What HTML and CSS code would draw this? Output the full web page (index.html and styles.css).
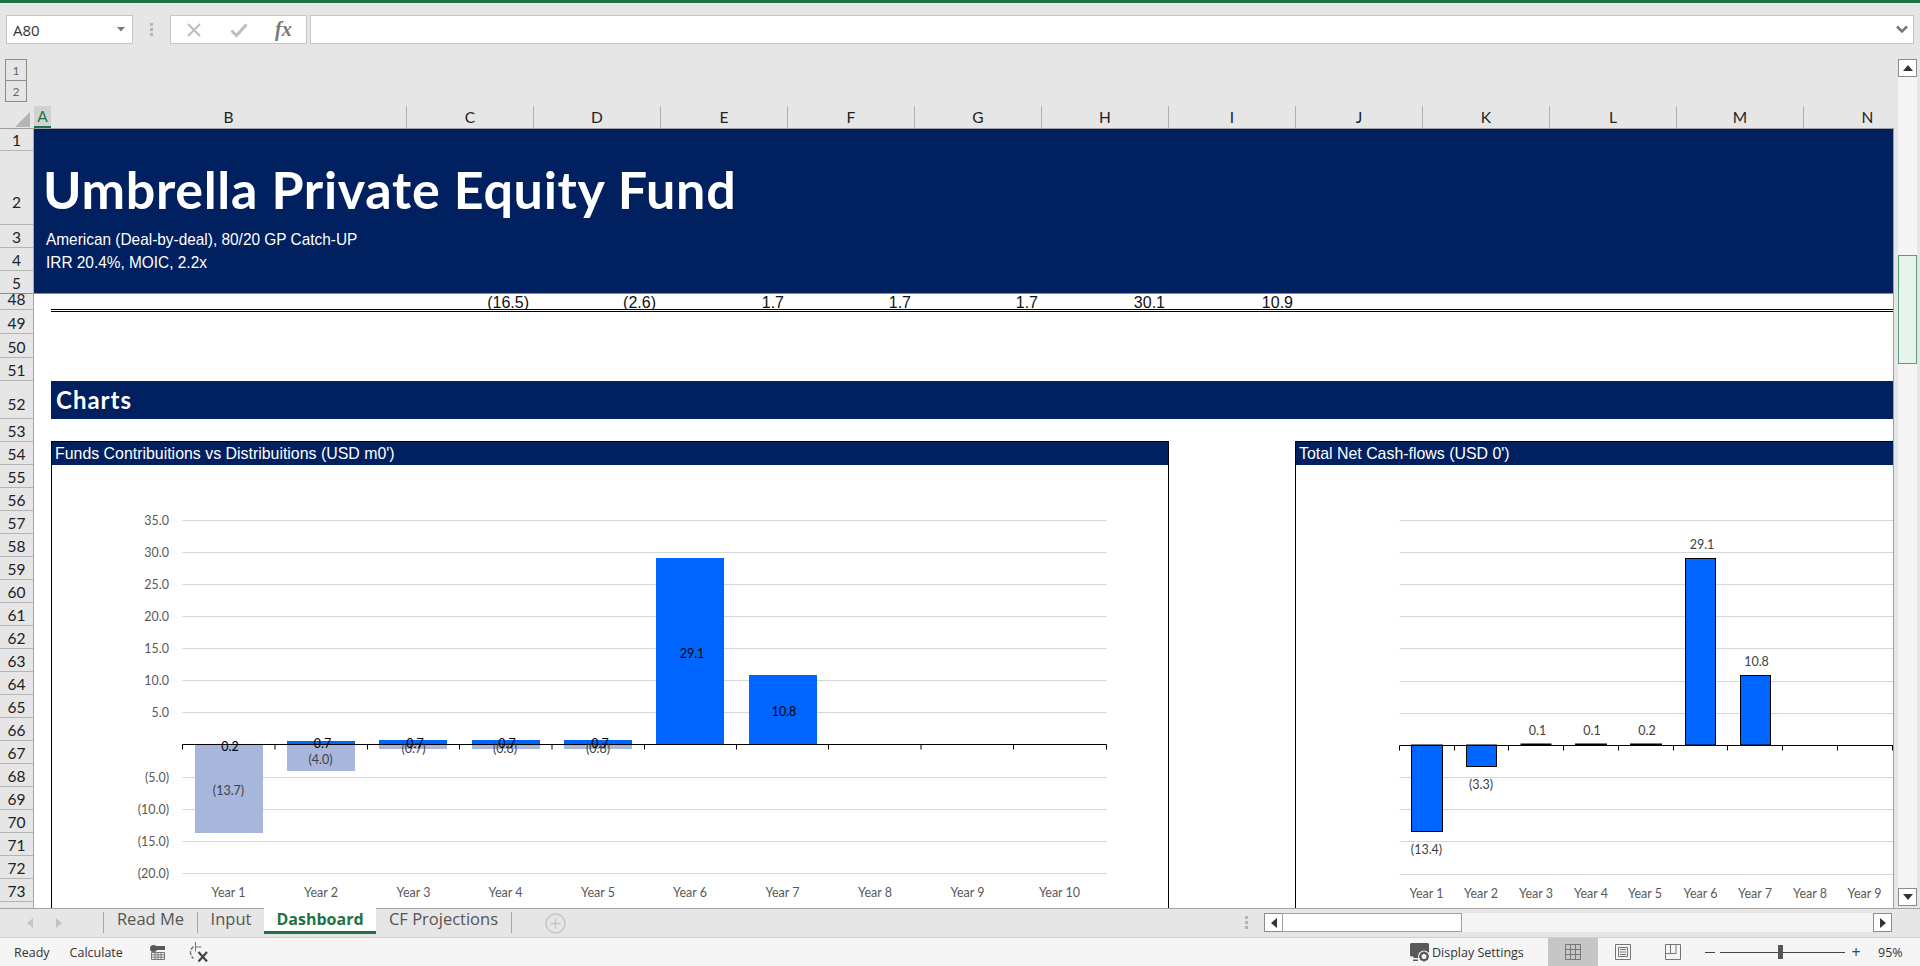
FILE: index.html
```html
<!DOCTYPE html>
<html lang="en">
<head>
<meta charset="utf-8">
<title>Umbrella Private Equity Fund</title>
<link rel="stylesheet" href="styles.css">
</head>
<body>
<div class="accent"></div>
<div class="formula-bar">
  <div class="namebox"><span>A80</span><svg class="caret" width="8" height="5" viewBox="0 0 8 5"><path d="M0 0h8L4 4.500z"/></svg></div>
  <div class="grip"><i></i><i></i><i></i></div>
  <div class="fxbox">
    <svg width="16" height="16" viewBox="0 0 16 16"><path d="M2 2l12 12M14 2L2 14" class="ic-light"/></svg>
    <svg width="18" height="16" viewBox="0 0 18 16"><path d="M1.500 8.500l5 5L16.500 2.500" class="ic-light ic-thick"/></svg>
    <span class="fx">fx</span>
  </div>
  <div class="formula-input"><svg width="12" height="9" viewBox="0 0 12 9"><path d="M1 1.500l5 5 5-5" class="ic-chev"/></svg></div>
</div>
<div class="middle">
  <div class="left">
    <div class="outline"><span class="lvl">1</span><span class="lvl">2</span></div>
    <div class="colhead">
      <div class="corner"><svg width="16" height="15" viewBox="0 0 16 15"><path d="M15 0v15H0z"/></svg></div>
      <div class="cols">
        <span class="col col-a">A</span><span class="col col-b">B</span><span class="col">C</span><span class="col">D</span><span class="col">E</span><span class="col">F</span><span class="col">G</span><span class="col">H</span><span class="col">I</span><span class="col">J</span><span class="col">K</span><span class="col">L</span><span class="col">M</span><span class="col col-n">N</span>
      </div>
    </div>
    <div class="sheet">
      <div class="rowheads">
        <span class="rh">1</span><span class="rh h74">2</span><span class="rh">3</span><span class="rh">4</span><span class="rh band">5</span>
        <span class="rh h16">48</span><span class="rh h24">49</span><span class="rh h24">50</span><span class="rh">51</span><span class="rh h38">52</span><span class="rh">53</span>
        <span class="rh">54</span><span class="rh">55</span><span class="rh">56</span><span class="rh">57</span><span class="rh">58</span><span class="rh">59</span><span class="rh">60</span><span class="rh">61</span><span class="rh">62</span><span class="rh">63</span><span class="rh">64</span><span class="rh">65</span><span class="rh">66</span><span class="rh">67</span><span class="rh">68</span><span class="rh">69</span><span class="rh">70</span><span class="rh">71</span><span class="rh">72</span><span class="rh">73</span><span class="rh"></span>
      </div>
      <div class="cells">
        <div class="banner">
          <div class="b-title">Umbrella Private Equity Fund</div>
          <div class="b-sub">American (Deal-by-deal), 80/20 GP Catch-UP</div>
          <div class="b-sub">IRR 20.4%, MOIC, 2.2x</div>
        </div>
        <div class="totals">
          <span class="v v-b"></span><span class="v">(16.5)</span><span class="v">(2.6)</span><span class="v">1.7</span><span class="v">1.7</span><span class="v">1.7</span><span class="v">30.1</span><span class="v">10.9</span>
        </div>
        <div class="section">Charts</div>
        <div class="charts">
          <div class="chart chart-one">
            <div class="chart-title"><span>Funds Contribuitions vs Distribuitions (USD m0')</span></div>
            <svg class="plot" width="1116" height="443" viewBox="52 465 1116 443">
              <g class="gridl">
                <path d="M182.500 520.500H1106.500M182.500 552.500H1106.500M182.500 584.500H1106.500M182.500 616.500H1106.500M182.500 648.500H1106.500M182.500 680.500H1106.500M182.500 712.500H1106.500M182.500 777.500H1106.500M182.500 809.500H1106.500M182.500 841.500H1106.500M182.500 873.500H1106.500"/>
              </g>
              <g class="neg">
                <rect x="195" y="744" width="68" height="89"/><rect x="287" y="744" width="68" height="27"/><rect x="379" y="744" width="68" height="5"/><rect x="472" y="744" width="68" height="5"/><rect x="564" y="744" width="68" height="5"/>
              </g>
              <g class="pos">
                <rect x="287" y="741" width="68" height="3"/><rect x="379" y="740" width="68" height="4"/><rect x="472" y="740" width="68" height="4"/><rect x="564" y="740" width="68" height="4"/><rect x="656" y="558" width="68" height="186"/><rect x="749" y="675" width="68" height="69"/>
              </g>
              <path class="axis" d="M182.500 744.500H1106.500M182.500 744.500v5M275 744.500v5M367.500 744.500v5M459.500 744.500v5M552 744.500v5M644.500 744.500v5M736.500 744.500v5M828.500 744.500v5M921 744.500v5M1013.500 744.500v5M1106.500 744.500v5"/>
              <g class="tick-y">
                <text x="169" y="525">35.0</text><text x="169" y="557">30.0</text><text x="169" y="589">25.0</text><text x="169" y="621">20.0</text><text x="169" y="653">15.0</text><text x="169" y="685">10.0</text><text x="169" y="717">5.0</text><text x="169" y="782">(5.0)</text><text x="169" y="814">(10.0)</text><text x="169" y="846">(15.0)</text><text x="169" y="878">(20.0)</text>
              </g>
              <g class="cat">
                <text x="228.500" y="897">Year 1</text><text x="321" y="897">Year 2</text><text x="413.500" y="897">Year 3</text><text x="505.500" y="897">Year 4</text><text x="598" y="897">Year 5</text><text x="690" y="897">Year 6</text><text x="782.500" y="897">Year 7</text><text x="875" y="897">Year 8</text><text x="967.500" y="897">Year 9</text><text x="1059.500" y="897">Year 10</text>
              </g>
              <g class="lab-neg">
                <text x="228.500" y="795">(13.7)</text><text x="320.500" y="764">(4.0)</text><text x="413.500" y="753">(0.7)</text><text x="505" y="753">(0.8)</text><text x="598" y="753">(0.8)</text>
              </g>
              <g class="lab-pos">
                <text x="230" y="751">0.2</text><text x="322.500" y="748">0.7</text><text x="415" y="748">0.7</text><text x="507" y="748">0.7</text><text x="600" y="748">0.7</text><text x="692" y="658">29.1</text><text x="784" y="716">10.8</text>
              </g>
            </svg>
          </div>
          <div class="chart chart-two">
            <div class="chart-title"><span>Total Net Cash-flows (USD 0')</span></div>
            <svg class="plot" width="598" height="443" viewBox="1296 465 598 443">
              <path class="gridl" d="M1399.500 520.500H1894M1399.500 552.500H1894M1399.500 584.500H1894M1399.500 616.500H1894M1399.500 648.500H1894M1399.500 681.500H1894M1399.500 713.500H1894M1399.500 777.500H1894M1399.500 809.500H1894M1399.500 841.500H1894M1399.500 874.500H1894"/>
              <g class="pos-b">
                <rect x="1411.500" y="745" width="31" height="86.500"/><rect x="1466.500" y="745" width="30" height="21.500"/><rect x="1685.500" y="558.500" width="30" height="186.500"/><rect x="1740.500" y="675.500" width="30" height="69.500"/>
                <rect x="1521" y="744" width="30" height="1"/><rect x="1575.500" y="744" width="31" height="1"/><rect x="1630.500" y="744" width="31" height="1"/>
              </g>
              <path class="axis" d="M1399.500 745.500H1894M1399.500 745.500v5M1454.500 745.500v5M1508.500 745.500v5M1563.500 745.500v5M1618.500 745.500v5M1673.500 745.500v5M1727.500 745.500v5M1782.500 745.500v5M1837.500 745.500v5M1892.500 745.500v5"/>
              <g class="cat">
                <text x="1426.500" y="898">Year 1</text><text x="1481" y="898">Year 2</text><text x="1536" y="898">Year 3</text><text x="1591" y="898">Year 4</text><text x="1645" y="898">Year 5</text><text x="1700.500" y="898">Year 6</text><text x="1755" y="898">Year 7</text><text x="1810" y="898">Year 8</text><text x="1864.500" y="898">Year 9</text>
              </g>
              <g class="lab-grey">
                <text x="1702" y="549">29.1</text><text x="1756.500" y="665.500">10.8</text><text x="1537.500" y="735">0.1</text><text x="1592" y="735">0.1</text><text x="1647" y="735">0.2</text><text x="1481" y="789">(3.3)</text><text x="1426.500" y="854">(13.4)</text>
              </g>
            </svg>
          </div>
        </div>
      </div>
    </div>
  </div>
  <div class="vscroll">
    <div class="vbtn"><svg width="10" height="6" viewBox="0 0 10 6"><path d="M5 0l5 6H0z"/></svg></div>
    <div class="vtrack"><div class="vthumb"></div></div>
    <div class="vbtn vbtn-down"><svg width="10" height="6" viewBox="0 0 10 6"><path d="M0 0h10L5 6z"/></svg></div>
  </div>
</div>
<div class="tabbar">
  <div class="tabs">
    <div class="nav"><svg width="6" height="10" viewBox="0 0 6 10"><path d="M6 0v10L0 5z"/></svg><svg width="6" height="10" viewBox="0 0 6 10"><path d="M0 0v10l6-5z"/></svg></div>
    <span class="tab tab-readme">Read Me</span>
    <span class="tab tab-input">Input</span>
    <span class="tab tab-active">Dashboard</span>
    <span class="tab tab-cf">CF Projections</span>
    <svg class="addtab" width="21" height="21" viewBox="0 0 21 21"><circle cx="10.500" cy="10.500" r="9.500"/><path d="M10.500 5.500v10M5.500 10.500h10"/></svg>
  </div>
  <div class="hscroll">
    <div class="hgrip"><i></i><i></i><i></i></div>
    <div class="hbtn"><svg width="6" height="10" viewBox="0 0 6 10"><path d="M6 0v10L0 5z"/></svg></div>
    <div class="htrack"><div class="hthumb"></div></div>
    <div class="hbtn"><svg width="6" height="10" viewBox="0 0 6 10"><path d="M0 0v10l6-5z"/></svg></div>
  </div>
</div>
<div class="status">
  <span class="st st-ready">Ready</span>
  <span class="st st-calc">Calculate</span>
  <svg class="st-icon1" width="15" height="15" viewBox="0 0 15 15"><circle cx="3.500" cy="3.500" r="3.500" class="d"/><rect x="5" y="1" width="10" height="4" class="d"/><path d="M1.500 7.500h13v7h-13zM1.500 9.800h13M1.500 12.200h13M5 7.500v7M8 7.500v7M11 7.500v7" class="s"/></svg>
  <svg class="st-icon2" width="20" height="20" viewBox="0 0 20 20"><path d="M5.500 4.600A7.200 7.200 0 0 0 5.500 16.400" class="s s-dash"/><path d="M7.500 0v9.500M7.500 5h6" class="s"/><path d="M10.500 10l8.500 9.500M19 10l-8.500 9.500" class="x"/></svg>
  <div class="st-right">
    <svg class="ds-icon" width="20" height="19" viewBox="0 0 20 19"><path d="M1.500 0h16a1.500 1.500 0 0 1 1.500 1.500V12H9v3H3.500v-1.500H1.500A1.500 1.500 0 0 1 0 12V1.500A1.500 1.500 0 0 1 1.500 0z" class="d"/><path d="M3 16.500h5v1.500H3z" class="d"/><circle cx="14" cy="13.500" r="6" class="w"/><circle cx="14" cy="13.500" r="3.600" class="ring"/><path d="M14 8.500v2M14 16.500v2M9 13.500h2M17 13.500h2M10.500 10l1.400 1.400M16.100 15.600l1.400 1.400M17.500 10l-1.400 1.400M11.900 15.600L10.500 17" class="teeth"/></svg>
    <span class="st st-ds">Display Settings</span>
    <div class="view view-on"><svg width="16" height="16" viewBox="0 0 16 16"><path d="M.5.500h15v15H.5zM.5 5.500h15M.5 10.500h15M5.500.500v15M10.500.500v15" class="s"/></svg></div>
    <div class="view"><svg width="16" height="16" viewBox="0 0 16 16"><path d="M.5.500h15v15H.5zM3.500 3.500h9v9h-9zM5 5.500h6M5 8h6M5 10.500h6" class="s"/></svg></div>
    <div class="view"><svg width="16" height="16" viewBox="0 0 16 16"><path d="M.5.500h15v15H.5zM.5 9.500h10.500V.5M5.500.500v9" class="s"/></svg></div>
    <div class="zoom">
      <span class="z-minus"></span>
      <div class="z-line"><span class="z-thumb"></span></div>
      <span class="z-plus">+</span>
      <span class="st z-pct">95%</span>
    </div>
  </div>
</div>
</body>
</html>
```
FILE: styles.css
```css
* { box-sizing: border-box; }
html, body { margin: 0; padding: 0; }
body {
  width: 1920px; height: 966px; overflow: hidden;
  background: #e6e6e6; color: #222;
  font-family: "Lato", "Liberation Sans", sans-serif;
  display: flex; flex-direction: column;
}
.accent { height: 3px; background: #217346; flex: none; }

/* formula bar */
.formula-bar { height: 41px; flex: none; display: flex; padding: 12px 6px 0 6px; }
.namebox { width: 127px; height: 29px; background: #fff; border: 1px solid #c6c6c6; display: flex; align-items: center; justify-content: space-between; padding: 0 7px 0 6px; font: 15px "Open Sans", sans-serif; color: #333; }
.caret path { fill: #777; }
.grip { width: 37px; display: flex; flex-direction: column; align-items: center; justify-content: center; gap: 2px; }
.grip i, .hgrip i { display: block; width: 3px; height: 3px; background: #b4b4b4; }
.fxbox { width: 137px; height: 29px; background: #fff; border: 1px solid #c6c6c6; display: flex; align-items: center; padding-left: 15px; gap: 28px; }
.ic-light { fill: none; stroke: #bdbdbd; stroke-width: 2; }
.ic-thick { stroke-width: 3; }
.fx { font: italic 700 20px "Liberation Serif", serif; color: #777; margin-left: -1px; }
.formula-input { flex: 1; margin-left: 3px; height: 29px; background: #fff; border: 1px solid #c6c6c6; display: flex; align-items: center; justify-content: flex-end; padding-right: 5px; }
.ic-chev { fill: none; stroke: #777; stroke-width: 2.500; }

/* middle */
.middle { height: 864px; flex: none; display: flex; }
.left { width: 1894px; flex: none; display: flex; flex-direction: column; }
.outline { height: 62px; flex: none; padding: 15px 0 0 5px; display: flex; flex-direction: column; }
.lvl { width: 22px; height: 22px; border: 1px solid #8c8c8c; background: #e6e6e6; font: 12px "Lato", sans-serif; color: #666; display: flex; align-items: center; justify-content: center; margin-bottom: -1px; }
.colhead { height: 22px; flex: none; display: flex; }
.corner { width: 34px; flex: none; padding: 5px 0 0 15px; }
.corner path { fill: #b4b4b4; }
.cols { flex: 1; display: flex; overflow: hidden; }
.col { width: 127px; flex: none; display: flex; align-items: center; justify-content: center; border-right: 1px solid #b0b0b0; font-size: 15.500px; color: #222; }
.col-a { width: 17px; background: #d2d2d2; color: #217346; border-bottom: 2px solid #217346; border-right: none; }
.col-b { width: 356px; }
.col-n { border-right: none; }

/* sheet */
.sheet { flex: 1; display: flex; min-height: 0; border-top: 1px solid #9e9e9e; }
.rowheads { width: 34px; flex: none; display: flex; flex-direction: column; overflow: hidden; background: #e6e6e6; border-right: 1px solid #a8a8a8; }
.rh { height: 23px; flex: none; display: flex; align-items: flex-end; justify-content: center; line-height: 19px; font-size: 15.500px; color: #222; border-bottom: 1px solid #b4b4b4; overflow: hidden; }
.rh:first-child { height: 22px; }
.h74 { height: 74px; padding-bottom: 12px; }
.h24 { height: 24px; }
.h38 { height: 38px; padding-bottom: 4px; }
.h16 { height: 16px; }
.rh.band { border-bottom-color: #8c8c8c; }
.cells { width: 1860px; flex: none; background: #fff; overflow: hidden; border-right: 1px solid #9e9e9e; }

.banner { height: 165px; background: #002060; color: #fff; padding: 30px 0 0 9px; border-bottom: 1px solid #8c8c8c; }
.b-title { font-size: 52px; font-weight: 700; line-height: 60px; height: 69px; letter-spacing: .700px; white-space: nowrap; }
.b-sub { font: 17px/23px "Liberation Sans", sans-serif; margin-left: 3px; white-space: nowrap; transform: scaleX(.906); transform-origin: left center; }

.totals { height: 18px; margin-left: 17px; border-bottom: 3px double #000; display: grid; grid-template-columns: 355px 127px 127px 128px 127px 127px 127px 128px; overflow: hidden; align-items: end; }
.v { font: 16px/18px "Liberation Sans", sans-serif; color: #111; text-align: right; padding-right: 4px; }

.section { margin: 69px 0 0 17px; height: 38px; background: #002060; color: #fff; font-size: 24px; font-weight: 700; line-height: 38px; letter-spacing: 1px; padding-left: 5px; }

.charts { display: flex; margin: 22px 0 0 17px; }
.chart { height: 470px; border: 1px solid #000; border-bottom: none; flex: none; }
.chart-one { width: 1118px; }
.chart-two { width: 600px; margin-left: 126px; border-right: none; }
.chart-title { height: 23px; background: #002060; color: #fff; font: 17px/24px "Liberation Sans", sans-serif; padding-left: 3px; white-space: nowrap; }
.chart-title span { display: inline-block; transform: scaleX(.935); transform-origin: left center; }
.plot { display: block; }
.plot text { font-family: "Lato", sans-serif; font-size: 12.500px; }
.gridl, .gridl path { fill: none; stroke: #d6d6d6; stroke-width: 1; }
.neg rect { fill: #a9b6db; }
.pos rect { fill: #0066ff; }
.pos-b rect { fill: #0066ff; stroke: #000; stroke-width: 1; }
.axis { fill: none; stroke: #000; stroke-width: 1; }
.tick-y text { fill: #595959; text-anchor: end; }
.cat text { fill: #595959; text-anchor: middle; }
.lab-neg text { fill: #404040; text-anchor: middle; }
.lab-pos text { fill: #000; text-anchor: middle; }
.lab-grey text { fill: #404040; text-anchor: middle; }

/* vertical scrollbar */
.vscroll { width: 26px; flex: none; padding: 15px 3px 2px 4px; display: flex; flex-direction: column; }
.vbtn { height: 18px; flex: none; background: #fff; border: 1px solid #8c8c8c; display: flex; align-items: center; justify-content: center; }
.vbtn svg path { fill: #333; }
.vtrack { flex: 1; background: #f5f5f5; padding-top: 178px; }
.vthumb { height: 109px; background: #e9f3ee; border: 1px solid #5a9f7c; }

/* tab bar */
.tabbar { height: 30px; flex: none; display: flex; border-top: 1px solid #a5a5a5; border-bottom: 1px solid #d0d0d0; }
.tabs { width: 1240px; flex: none; display: flex; align-items: flex-start; }
.nav { width: 104px; height: 21px; flex: none; display: flex; gap: 23px; padding: 6px 0 0 27px; border-right: 1px solid #a5a5a5; margin-top: 3px; }
.nav path { fill: #c4c4c4; }
.tab { font: 16.500px/14px "Open Sans", sans-serif; color: #555; text-align: center; height: 21px; margin-top: 3px; white-space: nowrap; flex: none; }
.tab-readme { width: 94px; border-right: 1px solid #a5a5a5; }
.tab-input { width: 66px; }
.tab-active { width: 112px; height: 26px; background: #fff; color: #217346; font-weight: 700; border-bottom: 3px solid #217346; margin-top: -1px; padding-top: 4px; font-size: 16px; }
.tab-cf { width: 136px; border-right: 1px solid #a5a5a5; }
.addtab { margin: 4px 0 0 33px; flex: none; }
.addtab circle, .addtab path { fill: none; stroke: #c6c6c6; stroke-width: 1.500; }
.hscroll { width: 652px; flex: none; display: flex; align-items: flex-start; padding-top: 4px; }
.hgrip { width: 24px; height: 18px; padding-left: 5px; display: flex; flex-direction: column; justify-content: center; gap: 2px; }
.hbtn { width: 19px; height: 19px; flex: none; background: #fff; border: 1px solid #8c8c8c; display: flex; align-items: center; justify-content: center; }
.hbtn path { fill: #333; }
.htrack { width: 590px; height: 19px; background: #f5f5f5; }
.hthumb { width: 180px; height: 19px; background: #fff; border: 1px solid #a0a0a0; margin-left: -1px; }

/* status bar */
.status { height: 28px; flex: none; background: #f5f5f5; display: flex; align-items: center; }
.st { font: 12.500px "Open Sans", sans-serif; color: #333; white-space: nowrap; }
.st-ready { margin-left: 14px; }
.st-calc { margin-left: 20px; }
.st-icon1 { margin-left: 27px; flex: none; }
.st-icon2 { margin-left: 23px; flex: none; }
.status .d { fill: #595959; }
.status .s { fill: none; stroke: #767676; stroke-width: 1; }
.status .s-dash { stroke-width: 1.500; stroke-dasharray: 4 1.500; }
.status .x { fill: none; stroke: #444; stroke-width: 2.200; }
.status .w { fill: #f5f5f5; }
.status .ring { fill: #f5f5f5; stroke: #595959; stroke-width: 2.200; }
.status .teeth { fill: none; stroke: #595959; stroke-width: 1.800; }
.st-right { margin-left: auto; display: flex; align-items: center; height: 100%; padding-right: 18px; }
.ds-icon { flex: none; margin-right: 2px; }
.st-ds { width: 116px; flex: none; }
.view { width: 50px; height: 100%; flex: none; display: flex; align-items: center; justify-content: center; }
.view-on { background: #c6c6c6; }
.zoom { display: flex; align-items: center; margin-left: 7px; }
.z-minus { width: 10px; height: 1px; background: #444; }
.z-line { width: 125px; height: 1px; background: #444; margin-left: 5px; position: relative; }
.z-thumb { position: absolute; left: 58px; top: -7px; width: 5px; height: 14px; background: #555; }
.z-plus { font: 16px/16px "Open Sans", sans-serif; color: #444; margin-left: 5px; width: 12px; text-align: center; }
.z-pct { margin-left: 16px; width: 24px; flex: none; }
```
